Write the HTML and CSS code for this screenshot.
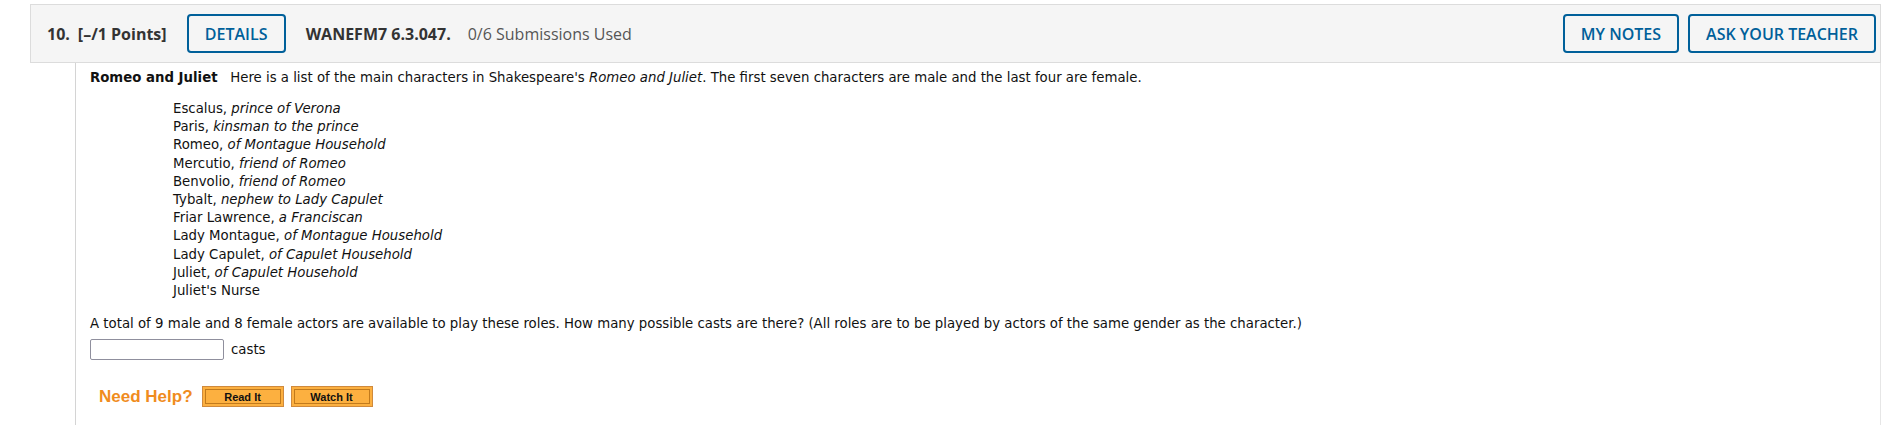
FILE: index.html
```html
<!DOCTYPE html>
<html>
<head>
<meta charset="utf-8">
<link rel="stylesheet" href="styles.css">
</head>
<body>
<div class="question">
  <div class="qhead">
    <span class="qnum">10.</span>
    <span class="qpoints">[–/1 Points]</span>
    <button class="hbtn details">DETAILS</button>
    <span class="qid">WANEFM7 6.3.047.</span>
    <span class="qsubs">0/6 Submissions Used</span>
    <span class="spacer"></span>
    <button class="hbtn">MY NOTES</button>
    <button class="hbtn">ASK YOUR TEACHER</button>
  </div>
  <div class="qbody">
    <p class="intro"><b>Romeo and Juliet</b>&nbsp;&nbsp; Here is a list of the main characters in Shakespeare's <i>Romeo and Juliet</i>. The first seven characters are male and the last four are female.</p>
    <ul class="chars">
      <li>Escalus, <i>prince of Verona</i></li>
      <li>Paris, <i>kinsman to the prince</i></li>
      <li>Romeo, <i>of Montague Household</i></li>
      <li>Mercutio, <i>friend of Romeo</i></li>
      <li>Benvolio, <i>friend of Romeo</i></li>
      <li>Tybalt, <i>nephew to Lady Capulet</i></li>
      <li>Friar Lawrence, <i>a Franciscan</i></li>
      <li>Lady Montague, <i>of Montague Household</i></li>
      <li>Lady Capulet, <i>of Capulet Household</i></li>
      <li>Juliet, <i>of Capulet Household</i></li>
      <li>Juliet's Nurse</li>
    </ul>
    <p class="ask">A total of 9 male and 8 female actors are available to play these roles. How many possible casts are there? (All roles are to be played by actors of the same gender as the character.)</p>
    <div class="answer"><input class="ansbox" type="text"><span class="unit">casts</span></div>
    <div class="help">
      <span class="needhelp">Need Help?</span>
      <span class="obtn"><span class="obtn-in">Read It</span></span>
      <span class="obtn"><span class="obtn-in">Watch It</span></span>
    </div>
  </div>
</div>
</body>
</html>
```
FILE: styles.css
```css
html, body { margin: 0; padding: 0; background: #fff; }
body { padding: 4px 9px 0 30px; }

.question { width: 100%; }

.qhead {
  display: flex;
  align-items: center;
  height: 57px;
  background: #f5f5f5;
  border: 1px solid #dcdcdc;
  padding: 0 4px 0 16px;
  font-family: "Open Sans", sans-serif;
  font-size: 16px;
  color: #333;
}
.qnum { font-weight: 700; margin-right: 8px; }
.qpoints { font-weight: 700; margin-right: 20px; }
.qid { font-weight: 700; margin-left: 20px; margin-right: 17px; }
.qsubs { font-weight: 400; color: #555; }
.spacer { flex: 1; }

.hbtn {
  font-family: "Open Sans", sans-serif;
  font-size: 16px;
  font-weight: 600;
  color: #00609a;
  background: #f5f5f5;
  border: 2px solid #00609a;
  border-radius: 4px;
  height: 39px;
  padding: 0 16px;
  margin: 0;
}
.hbtn + .hbtn { margin-left: 9px; }
.hbtn.details { width: 99px; padding: 0; }

.qbody {
  margin-left: 45px;
  border-left: 1px solid #d4d4d4;
  border-right: 1px solid #e6e6e6;
  padding: 6px 0 20px 14px;
  font-family: "DejaVu Sans", Verdana, sans-serif;
  font-size: 13.3px;
  line-height: 18px;
  color: #111;
  min-height: 340px;
}
.qbody p { margin: 0; }
.intro b { font-weight: 700; }
.chars { list-style: none; margin: 13px 0 0 0; padding: 0 0 0 83px; }
.chars li { line-height: 18.2px; }
.ask { margin-top: 15px !important; }

.answer { display: flex; align-items: center; margin-top: 6px; }
.ansbox {
  width: 134px;
  height: 21px;
  box-sizing: border-box;
  border: 1px solid #8f8f9d;
  border-radius: 2px;
  margin: 0 7px 0 0;
  padding: 0 3px;
  background: #fff;
}
.unit { line-height: 18px; }

.help {
  display: flex;
  align-items: center;
  margin-top: 26px;
  padding-left: 9px;
}
.needhelp {
  font-family: "Liberation Sans", Arial, sans-serif;
  font-weight: 700;
  font-size: 17px;
  color: #f08c1e;
  margin-right: 9px;
}
.obtn {
  display: inline-block;
  box-sizing: border-box;
  width: 82px;
  height: 21px;
  border: 1px solid #d08a3c;
  background: #fcb040;
  padding: 2px;
  margin-right: 7px;
}
.obtn-in {
  display: flex;
  align-items: center;
  justify-content: center;
  height: 100%;
  box-sizing: border-box;
  border: 1px solid #c17a1c;
  font-family: "Liberation Sans", Arial, sans-serif;
  font-weight: 700;
  font-size: 11px;
  color: #111;
}
```
